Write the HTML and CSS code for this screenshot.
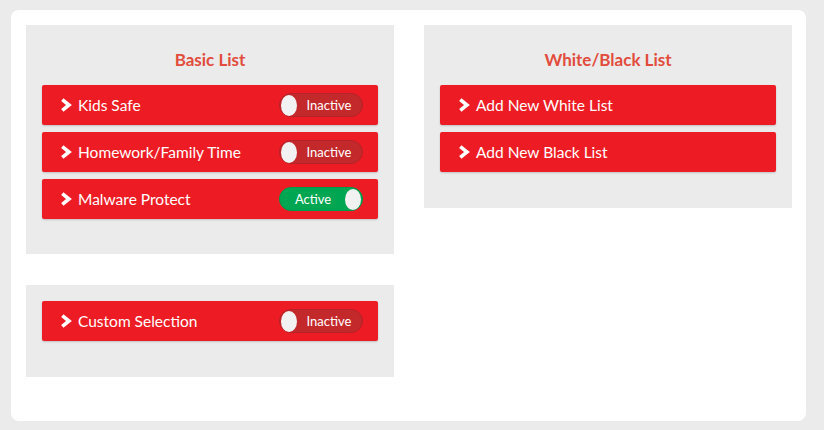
FILE: index.html
```html
<!DOCTYPE html>
<html>
<head>
<meta charset="utf-8">
<link rel="stylesheet" href="styles.css">
</head>
<body>
<div class="card">
  <div class="col">
    <section class="panel panel-basic">
      <h2 class="title">Basic List</h2>
      <div class="row">
        <span class="label"><svg class="chev" viewBox="0 0 12 14"><polyline points="2.3,1.6 9,7 2.3,12.4"/></svg>Kids Safe</span>
        <span class="toggle off"><span class="knob"></span><span class="state">Inactive</span></span>
      </div>
      <div class="row">
        <span class="label"><svg class="chev" viewBox="0 0 12 14"><polyline points="2.3,1.6 9,7 2.3,12.4"/></svg>Homework/Family Time</span>
        <span class="toggle off"><span class="knob"></span><span class="state">Inactive</span></span>
      </div>
      <div class="row">
        <span class="label"><svg class="chev" viewBox="0 0 12 14"><polyline points="2.3,1.6 9,7 2.3,12.4"/></svg>Malware Protect</span>
        <span class="toggle on"><span class="state">Active</span><span class="knob"></span></span>
      </div>
    </section>
    <section class="panel panel-custom">
      <div class="row">
        <span class="label"><svg class="chev" viewBox="0 0 12 14"><polyline points="2.3,1.6 9,7 2.3,12.4"/></svg>Custom Selection</span>
        <span class="toggle off"><span class="knob"></span><span class="state">Inactive</span></span>
      </div>
    </section>
  </div>
  <div class="col">
    <section class="panel panel-wb">
      <h2 class="title">White/Black List</h2>
      <div class="row">
        <span class="label"><svg class="chev" viewBox="0 0 12 14"><polyline points="2.3,1.6 9,7 2.3,12.4"/></svg>Add New White List</span>
      </div>
      <div class="row">
        <span class="label"><svg class="chev" viewBox="0 0 12 14"><polyline points="2.3,1.6 9,7 2.3,12.4"/></svg>Add New Black List</span>
      </div>
    </section>
  </div>
</div>
</body>
</html>
```
FILE: styles.css
```css
html, body {
  margin: 0;
  padding: 0;
  background: #ebebeb;
  font-family: Lato, "Open Sans", sans-serif;
}
.card {
  box-sizing: border-box;
  margin: 10px 0 0 11px;
  width: 795px;
  height: 411px;
  background: #ffffff;
  border-radius: 8px;
  padding: 15px 14px 0 15px;
  display: grid;
  grid-template-columns: 368px 368px;
  column-gap: 30px;
  align-items: start;
}
.col {
  display: flex;
  flex-direction: column;
  gap: 31px;
}
.panel {
  box-sizing: border-box;
  background: #ebebeb;
  padding: 0 16px;
}
.panel-basic { height: 229px; }
.panel-custom { height: 92px; padding-top: 16px; }
.panel-wb { height: 183px; }
.title {
  margin: 0;
  padding-top: 25px;
  height: 60px;
  box-sizing: border-box;
  line-height: 20px;
  font-size: 17px;
  font-weight: 700;
  color: #e24c3c;
  text-align: center;
}
.row {
  height: 40px;
  margin-bottom: 7px;
  background: #ed1c24;
  border-radius: 2px;
  box-shadow: 0 1px 2px rgba(0, 0, 0, 0.18);
  display: flex;
  align-items: center;
  justify-content: space-between;
  padding: 0 15px 0 18px;
  color: #ffffff;
}
.label {
  display: flex;
  align-items: center;
  font-size: 15.5px;
}
.chev {
  width: 12px;
  height: 14px;
  margin-right: 6px;
  fill: none;
  stroke: #ffffff;
  stroke-width: 3.6;
  stroke-linejoin: miter;
  stroke-linecap: butt;
}
.toggle {
  box-sizing: border-box;
  width: 84px;
  height: 24px;
  border-radius: 12px;
  display: flex;
  align-items: center;
  padding: 0 1px;
  font-size: 13px;
}
.toggle.off {
  background: #c3282b;
  border: 1px solid #b42327;
}
.toggle.on {
  background: #00a651;
  border: 1px solid #009a4a;
}
.knob {
  width: 16px;
  height: 21px;
  border-radius: 50%;
  background: #f2f2f2;
  flex: none;
}
.state {
  flex: 1;
  text-align: center;
  line-height: 20px;
}
```
